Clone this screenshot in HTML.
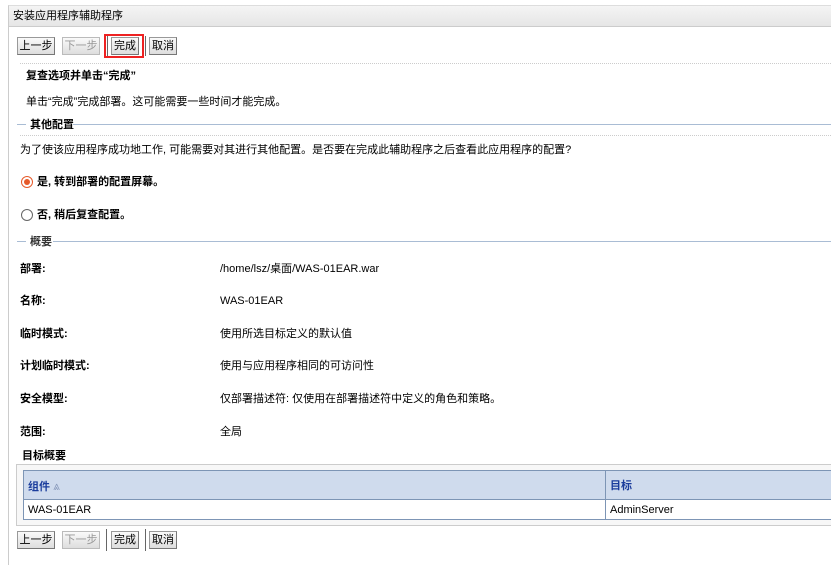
<!DOCTYPE html>
<html><head><meta charset="utf-8"><style>
*{margin:0;padding:0;box-sizing:border-box}
body{width:831px;height:561px;background:#fff;font-family:"Liberation Sans","Noto Sans CJK SC",sans-serif;font-size:11px;line-height:14px;color:#000;position:relative;overflow:hidden}
.a{position:absolute;white-space:nowrap;line-height:14px}
.panel{position:absolute;left:8px;top:5px;width:830px;height:560px;border-left:1px solid #ccc;border-top:1px solid #ddd}
.title{position:absolute;left:9px;top:6px;width:822px;height:21px;background:linear-gradient(#f4f4f4,#e6e6e6);border-bottom:1px solid #ccc;padding:3px 0 0 4px;font-size:11px}
.btn{position:absolute;height:18px;border:1px solid #999;background:linear-gradient(#fafafa,#ddd);font-size:11px;text-align:center;line-height:16px;border-right-color:#777;border-bottom-color:#777}
.dis{color:#999;border-color:#bbb}
.sep{position:absolute;width:1px;background:#666}
.b{font-weight:bold}
.leg{position:absolute;height:1px;background:#a9bcd4}
.dot{position:absolute;left:20px;width:811px;border-top:1px dotted #ccc}
</style></head><body>
<div class="panel"></div>
<div class="title">安装应用程序辅助程序</div>

<div class="btn" style="left:17px;top:37px;width:38px">上一步</div>
<div class="btn dis" style="left:62px;top:37px;width:38px">下一步</div>
<div class="sep" style="left:107px;top:36px;height:20px"></div>
<div class="btn" style="left:111px;top:37px;width:28px">完成</div>
<div style="position:absolute;left:104px;top:34px;width:40px;height:24px;border:2px solid #e22"></div>
<div class="sep" style="left:145px;top:36px;height:20px"></div>
<div class="btn" style="left:149px;top:37px;width:28px">取消</div>
<div class="dot" style="top:63px"></div>

<div class="a b" style="left:26px;top:69px">复查选项并单击“完成”</div>
<div class="a" style="left:26px;top:95px">单击“完成”完成部署。这可能需要一些时间才能完成。</div>
<div class="leg" style="left:17px;top:124px;width:9px"></div>
<div class="a b" style="left:30px;top:118px">其他配置</div>
<div class="leg" style="left:73px;top:124px;width:758px"></div>
<div class="dot" style="top:135px"></div>
<div class="a" style="left:20px;top:143px">为了使该应用程序成功地工作, 可能需要对其进行其他配置。是否要在完成此辅助程序之后查看此应用程序的配置?</div>
<div class="a" style="left:21px;top:176px;width:12px;height:12px;border:1px solid #e65a2a;border-radius:50%"><div style="position:absolute;left:2px;top:2px;width:6px;height:6px;border-radius:50%;background:#e65a2a"></div></div>
<div class="a b" style="left:37px;top:175px">是, 转到部署的配置屏幕。</div>
<div class="a" style="left:21px;top:209px;width:12px;height:12px;border:1px solid #666;border-radius:50%"></div>
<div class="a b" style="left:37px;top:208px">否, 稍后复查配置。</div>
<div class="leg" style="left:17px;top:241px;width:9px"></div>
<div class="a b" style="left:30px;top:235px;color:#333">概要</div>
<div class="leg" style="left:53px;top:241px;width:778px"></div>

<div class="a b" style="left:20px;top:262px">部署:</div><div class="a" style="left:220px;top:262px">/home/lsz/桌面/WAS-01EAR.war</div>
<div class="a b" style="left:20px;top:294px">名称:</div><div class="a" style="left:220px;top:294px">WAS-01EAR</div>
<div class="a b" style="left:20px;top:327px">临时模式:</div><div class="a" style="left:220px;top:327px">使用所选目标定义的默认值</div>
<div class="a b" style="left:20px;top:359px">计划临时模式:</div><div class="a" style="left:220px;top:359px">使用与应用程序相同的可访问性</div>
<div class="a b" style="left:20px;top:392px">安全模型:</div><div class="a" style="left:220px;top:392px">仅部署描述符: 仅使用在部署描述符中定义的角色和策略。</div>
<div class="a b" style="left:20px;top:425px">范围:</div><div class="a" style="left:220px;top:425px">全局</div>

<div class="a b" style="left:22px;top:449px">目标概要</div>
<div style="position:absolute;left:16px;top:464px;width:815px;height:62px;border:1px solid #ccc;border-right:none;background:#f7f7f7"></div>
<div style="position:absolute;left:23px;top:470px;width:808px;height:50px;border:1px solid #7d95b5;border-right:none;background:#fff"></div>
<div style="position:absolute;left:24px;top:471px;width:807px;height:29px;background:#cfdbed;border-bottom:1px solid #7d95b5"></div>
<div class="sep" style="left:605px;top:471px;height:48px;background:#7d95b5"></div>
<div class="a b" style="left:28px;top:479px;color:#1a3c9c">组件 <span style="color:#8899bb;font-weight:normal;font-size:12px">⩓</span></div>
<div class="a b" style="left:610px;top:479px;color:#1a3c9c">目标</div>
<div class="a" style="left:28px;top:503px">WAS-01EAR</div>
<div class="a" style="left:610px;top:503px">AdminServer</div>

<div class="btn" style="left:17px;top:531px;width:38px">上一步</div>
<div class="btn dis" style="left:62px;top:531px;width:38px">下一步</div>
<div class="sep" style="left:106px;top:529px;height:22px"></div>
<div class="btn" style="left:111px;top:531px;width:28px">完成</div>
<div class="sep" style="left:145px;top:529px;height:22px"></div>
<div class="btn" style="left:149px;top:531px;width:28px">取消</div>
</body></html>
